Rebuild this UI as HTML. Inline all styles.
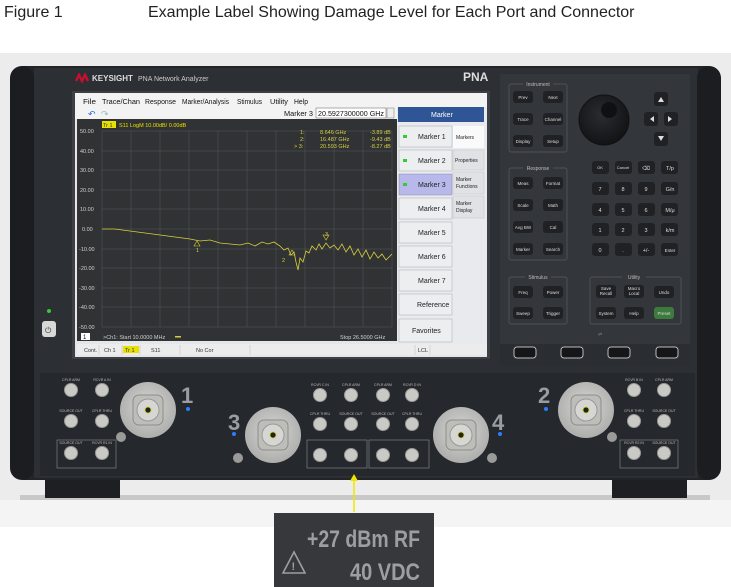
<!DOCTYPE html>
<html><head><meta charset="utf-8"><style>
html,body{margin:0;padding:0;background:#fff;width:731px;height:587px;overflow:hidden}
svg{display:block}
text{font-family:"Liberation Sans",sans-serif}
</style></head><body>
<svg width="731" height="587" viewBox="0 0 731 587">
<defs>
<radialGradient id="knob" cx="0.45" cy="0.4" r="0.6"><stop offset="0" stop-color="#2a2c30"/><stop offset="1" stop-color="#121315"/></radialGradient>
<radialGradient id="bigc" cx="0.5" cy="0.45" r="0.6"><stop offset="0" stop-color="#d8d8d6"/><stop offset="1" stop-color="#a9a9a7"/></radialGradient>
</defs>
<rect width="731" height="587" fill="#fff"/>
<text x="4" y="17" font-size="16" fill="#222">Figure 1</text>
<text x="148" y="17" font-size="16" fill="#222">Example Label Showing Damage Level for Each Port and Connector</text>
<rect x="0" y="53" width="731" height="474" fill="#ececec"/>
<rect x="0" y="500" width="731" height="27" fill="#f4f4f4"/>
<rect x="20" y="495" width="690" height="5" fill="#c8c8c8"/>
<rect x="45" y="470" width="75" height="28" fill="#1d1f22"/>
<rect x="612" y="470" width="75" height="28" fill="#1d1f22"/>
<rect x="10" y="66" width="711" height="414" rx="14" fill="#222428"/>
<rect x="34" y="68" width="664" height="410" fill="#2c2f34"/>
<rect x="10" y="66" width="24" height="414" rx="12" fill="#1b1d20"/>
<rect x="697" y="66" width="24" height="414" rx="12" fill="#1b1d20"/>
<rect x="500" y="74" width="190" height="270" fill="#33363b"/>
<rect x="500" y="344" width="190" height="22" fill="#2a2d31"/>
<path d="M76 81 l3 -6 l3 6 l3 -6 l3 6" stroke="#c8102e" stroke-width="2.5" fill="none"/>
<text x="92" y="81" font-size="8" fill="#ddd" font-weight="bold">KEYSIGHT</text>
<text x="138" y="81" font-size="7" fill="#ccc">PNA Network Analyzer</text>
<text x="463" y="81" font-size="12" fill="#ddd" font-weight="bold">PNA</text>
<rect x="72" y="91" width="418" height="268" fill="#3c3f44"/>
<rect x="75" y="93" width="412" height="264" fill="#e4e6ea"/>
<rect x="75" y="93" width="412" height="14" fill="#f3f3f3"/>
<g font-size="7" fill="#111">
<text x="83" y="104" textLength="13" lengthAdjust="spacingAndGlyphs">File</text><text x="102" y="104" textLength="38" lengthAdjust="spacingAndGlyphs">Trace/Chan</text><text x="145" y="104" textLength="31" lengthAdjust="spacingAndGlyphs">Response</text><text x="182" y="104" textLength="47" lengthAdjust="spacingAndGlyphs">Marker/Analysis</text><text x="237" y="104" textLength="25" lengthAdjust="spacingAndGlyphs">Stimulus</text><text x="270" y="104" textLength="18" lengthAdjust="spacingAndGlyphs">Utility</text><text x="294" y="104" textLength="14" lengthAdjust="spacingAndGlyphs">Help</text>
</g>
<rect x="75" y="107" width="322" height="12" fill="#f3f3f3"/>
<text x="284" y="116" font-size="7.5" fill="#111" textLength="29" lengthAdjust="spacingAndGlyphs">Marker 3</text>
<rect x="316" y="108" width="70" height="10" fill="#fff" stroke="#777" stroke-width="0.6"/>
<text x="318" y="116" font-size="7.5" fill="#111" textLength="66" lengthAdjust="spacingAndGlyphs">20.5927300000 GHz</text>
<rect x="387" y="108" width="7" height="10" fill="#eee" stroke="#777" stroke-width="0.5"/>
<text x="88" y="117" font-size="9" fill="#2a6fd0">↶</text><text x="101" y="117" font-size="9" fill="#9bb">↷</text>
<rect x="77" y="119" width="320" height="222" fill="#303234"/>
<g stroke="#55585a" stroke-width="0.5">
<path d="M102 131H392M102 151H392M102 170H392M102 190H392M102 209H392M102 229H392M102 249H392M102 268H392M102 288H392M102 307H392M102 327H392"/>
<path d="M102 131V327M131 131V327M160 131V327M189 131V327M218 131V327M247 131V327M276 131V327M305 131V327M334 131V327M363 131V327M392 131V327"/>
</g>
<g font-size="5.5" fill="#cfcfcf">
<text x="80" y="133">50.00</text><text x="80" y="153">40.00</text><text x="80" y="172">30.00</text><text x="80" y="192">20.00</text><text x="80" y="211">10.00</text><text x="82" y="231">0.00</text><text x="79" y="251">-10.00</text><text x="79" y="270">-20.00</text><text x="79" y="290">-30.00</text><text x="79" y="309">-40.00</text><text x="79" y="329">-50.00</text>
</g>
<rect x="102" y="121" width="14" height="7" fill="#e8e000"/>
<text x="103" y="127" font-size="5.5" fill="#333">Tr 1</text>
<text x="119" y="127" font-size="5.5" fill="#e8e000">S11 LogM 10.00dB/  0.00dB</text>
<g font-size="5.5" fill="#d8cf40">
<text x="300" y="134">1:</text><text x="320" y="134">8.646 GHz</text><text x="370" y="134">-3.89 dB</text>
<text x="300" y="141">2:</text><text x="320" y="141">16.487 GHz</text><text x="370" y="141">-9.43 dB</text>
<text x="294" y="148">&gt; 3:</text><text x="320" y="148">20.593 GHz</text><text x="370" y="148">-8.27 dB</text>
</g>
<path d="M102 229 L115 229 L130 231 L145 233 L160 235 L175 237 L190 239 L200 241 L210 240 L220 243 L230 244 L240 245 L248 243 L255 246 L262 242 L268 244 L274 242 L280 246 L284 250 L288 248 L291 255 L294 252 L296 262 L298 270 L300 258 L303 262 L306 251 L309 253 L312 246 L316 250 L319 244 L322 249 L326 243 L330 248 L334 245 L338 250 L342 244 L346 252 L350 246 L354 255 L358 249 L362 257 L366 250 L370 259 L374 252 L378 258 L382 254 L386 260 L392 254" stroke="#d8cf40" stroke-width="0.8" fill="none"/>
<path d="M197 241 l-3 5 h6z M292 250 l-3 5 h6z M326 240 l-3 -5 h6z" stroke="#d8cf40" stroke-width="0.6" fill="none"/>
<g font-size="5.5" fill="#d8cf40"><text x="196" y="252">1</text><text x="282" y="262">2</text><text x="325" y="236">3</text></g>
<rect x="81" y="333" width="9" height="7" fill="#fff"/><text x="83" y="339" font-size="6" fill="#111">1</text>
<g font-size="5.5" fill="#cfcfcf"><text x="103" y="339">&gt;Ch1:   Start  10.0000 MHz</text><text x="340" y="339">Stop  26.5000 GHz</text></g>
<rect x="175" y="336" width="6" height="1.5" fill="#d8cf40"/>
<rect x="77" y="344" width="410" height="11" fill="#ececec"/>
<g font-size="5.5" fill="#333"><text x="84" y="352">Cont.</text><text x="104" y="352">Ch 1</text><text x="151" y="352">S11</text><text x="196" y="352">No Cor</text><text x="418" y="352">LCL</text></g>
<rect x="123" y="346" width="16" height="7" fill="#e8e000"/><text x="125" y="352" font-size="5.5" fill="#333">Tr 1</text>
<g stroke="#bbb" stroke-width="0.5"><path d="M99 345v10M122 345v10M140 345v10M180 345v10M250 345v10M415 345v10M430 345v10"/></g>
<rect x="397" y="107" width="90" height="237" fill="#e8eaee"/>
<rect x="398" y="107" width="86" height="15" fill="#2f5597"/>
<text x="431" y="117" font-size="7" fill="#fff">Marker</text>
<g font-size="7" fill="#222">
<rect x="399" y="126" width="53" height="21" fill="#eceef0" stroke="#aaa" stroke-width="0.5"/><text x="418" y="139">Marker 1</text><rect x="403" y="135" width="4" height="3" fill="#3c3"/>
<rect x="399" y="150" width="53" height="21" fill="#eceef0" stroke="#aaa" stroke-width="0.5"/><text x="418" y="163">Marker 2</text><rect x="403" y="159" width="4" height="3" fill="#3c3"/>
<rect x="399" y="174" width="53" height="21" fill="#b8b8ea" stroke="#88a" stroke-width="0.5"/><text x="418" y="187">Marker 3</text><rect x="403" y="183" width="4" height="3" fill="#3c3"/>
<rect x="399" y="198" width="53" height="21" fill="#eceef0" stroke="#aaa" stroke-width="0.5"/><text x="418" y="211">Marker 4</text>
<rect x="399" y="222" width="53" height="21" fill="#eceef0" stroke="#aaa" stroke-width="0.5"/><text x="418" y="235">Marker 5</text>
<rect x="399" y="246" width="53" height="21" fill="#eceef0" stroke="#aaa" stroke-width="0.5"/><text x="418" y="259">Marker 6</text>
<rect x="399" y="270" width="53" height="21" fill="#eceef0" stroke="#aaa" stroke-width="0.5"/><text x="418" y="283">Marker 7</text>
<rect x="399" y="294" width="53" height="21" fill="#eceef0" stroke="#aaa" stroke-width="0.5"/><text x="417" y="307">Reference</text>
<rect x="399" y="319" width="53" height="23" fill="#eceef0" stroke="#aaa" stroke-width="0.5"/><text x="412" y="333">Favorites</text>
</g>
<g font-size="5" fill="#222">
<rect x="453" y="126" width="31" height="22" fill="#fafafa"/><text x="456" y="139">Markers</text>
<rect x="453" y="150" width="31" height="20" fill="#e0e2e6" stroke="#bbb" stroke-width="0.4"/><text x="455" y="162">Properties</text>
<rect x="453" y="172" width="31" height="22" fill="#e0e2e6" stroke="#bbb" stroke-width="0.4"/><text x="456" y="181">Marker</text><text x="456" y="188">Functions</text>
<rect x="453" y="196" width="31" height="22" fill="#e0e2e6" stroke="#bbb" stroke-width="0.4"/><text x="456" y="205">Marker</text><text x="456" y="212">Display</text>
</g>
<circle cx="49" cy="311" r="2" fill="#3c3"/>
<rect x="42" y="321" width="14" height="16" rx="3" fill="#d8d8d8"/>
<text x="45" y="333" font-size="8" fill="#333">⏻</text>
<g fill="none" stroke="#5a5d62" stroke-width="0.7">
<rect x="509" y="84" width="58" height="68" rx="2"/><rect x="509" y="168" width="58" height="92" rx="2"/><rect x="509" y="277" width="58" height="47" rx="2"/><rect x="590" y="277" width="91" height="47" rx="2"/>
</g>
<g font-size="5" text-anchor="middle">
<rect x="523" y="81" width="30" height="6" fill="#33363b"/><rect x="523" y="165" width="30" height="6" fill="#33363b"/><rect x="525" y="274" width="26" height="6" fill="#33363b"/><rect x="622" y="274" width="24" height="6" fill="#33363b"/>
<g fill="#bbb"><text x="538" y="86">Instrument</text><text x="538" y="170">Response</text><text x="538" y="279">Stimulus</text><text x="634" y="279">Utility</text></g>
</g>
<g fill="#1f2124">
<rect x="513" y="91" width="20" height="12" rx="3"/><rect x="543" y="91" width="20" height="12" rx="3"/>
<rect x="513" y="113" width="20" height="12" rx="3"/><rect x="543" y="113" width="20" height="12" rx="3"/>
<rect x="513" y="135" width="20" height="12" rx="3"/><rect x="543" y="135" width="20" height="12" rx="3"/>
<rect x="513" y="177" width="20" height="12" rx="3"/><rect x="543" y="177" width="20" height="12" rx="3"/>
<rect x="513" y="199" width="20" height="12" rx="3"/><rect x="543" y="199" width="20" height="12" rx="3"/>
<rect x="513" y="221" width="20" height="12" rx="3"/><rect x="543" y="221" width="20" height="12" rx="3"/>
<rect x="513" y="243" width="20" height="12" rx="3"/><rect x="543" y="243" width="20" height="12" rx="3"/>
<rect x="513" y="286" width="20" height="12" rx="3"/><rect x="543" y="286" width="20" height="12" rx="3"/>
<rect x="513" y="307" width="20" height="12" rx="3"/><rect x="543" y="307" width="20" height="12" rx="3"/>
<rect x="596" y="285" width="20" height="13" rx="3"/><rect x="624" y="285" width="20" height="13" rx="3"/><rect x="654" y="286" width="20" height="12" rx="3"/>
<rect x="596" y="307" width="20" height="12" rx="3"/><rect x="624" y="307" width="20" height="12" rx="3"/>
</g>
<rect x="654" y="307" width="20" height="12" rx="3" fill="#3d7a3d"/>
<g font-size="4.5" fill="#ddd" text-anchor="middle">
<text x="523" y="99">Prev</text><text x="553" y="99">Next</text><text x="523" y="121">Trace</text><text x="553" y="121">Channel</text><text x="523" y="143">Display</text><text x="553" y="143">Setup</text>
<text x="523" y="185">Meas</text><text x="553" y="185">Format</text><text x="523" y="207">Scale</text><text x="553" y="207">Math</text><text x="523" y="229">Avg BW</text><text x="553" y="229">Cal</text><text x="523" y="251">Marker</text><text x="553" y="251">Search</text>
<text x="523" y="294">Freq</text><text x="553" y="294">Power</text><text x="523" y="315">Sweep</text><text x="553" y="315">Trigger</text>
<text x="606" y="290">Save</text><text x="606" y="295">Recall</text><text x="634" y="290">Macro</text><text x="634" y="295">Local</text><text x="664" y="294">Undo</text>
<text x="606" y="315">System</text><text x="634" y="315">Help</text><text x="664" y="315">Preset</text>
</g>
<circle cx="604" cy="120" r="25" fill="url(#knob)" stroke="#111" stroke-width="1"/>
<circle cx="609" cy="110" r="8" fill="#0f1012"/>
<g fill="#1f2124">
<rect x="654" y="92" width="14" height="14" rx="3"/><rect x="644" y="112" width="14" height="14" rx="3"/><rect x="664" y="112" width="14" height="14" rx="3"/><rect x="654" y="132" width="14" height="14" rx="3"/>
</g>
<g fill="#ddd"><path d="M658 102 l3 -5 l3 5z M654 116 v6 l-4 -3z M668 116 v6 l4 -3z M658 136 l3 5 l3 -5z"/></g>
<g fill="#1f2124">
<rect x="592" y="161" width="17" height="13" rx="3"/><rect x="615" y="161" width="17" height="13" rx="3"/><rect x="638" y="161" width="17" height="13" rx="3"/><rect x="661" y="161" width="17" height="13" rx="3"/>
<rect x="592" y="182" width="17" height="13" rx="3"/><rect x="615" y="182" width="17" height="13" rx="3"/><rect x="638" y="182" width="17" height="13" rx="3"/><rect x="661" y="182" width="17" height="13" rx="3"/>
<rect x="592" y="203" width="17" height="13" rx="3"/><rect x="615" y="203" width="17" height="13" rx="3"/><rect x="638" y="203" width="17" height="13" rx="3"/><rect x="661" y="203" width="17" height="13" rx="3"/>
<rect x="592" y="223" width="17" height="13" rx="3"/><rect x="615" y="223" width="17" height="13" rx="3"/><rect x="638" y="223" width="17" height="13" rx="3"/><rect x="661" y="223" width="17" height="13" rx="3"/>
<rect x="592" y="243" width="17" height="13" rx="3"/><rect x="615" y="243" width="17" height="13" rx="3"/><rect x="638" y="243" width="17" height="13" rx="3"/><rect x="661" y="243" width="17" height="13" rx="3"/>
</g>
<g font-size="5.5" fill="#ddd" text-anchor="middle">
<text x="600" y="169" font-size="4">OK</text><text x="623" y="169" font-size="4">Cancel</text><text x="646" y="170">⌫</text><text x="670" y="170">T/p</text>
<text x="600" y="191">7</text><text x="623" y="191">8</text><text x="646" y="191">9</text><text x="670" y="191">G/n</text>
<text x="600" y="212">4</text><text x="623" y="212">5</text><text x="646" y="212">6</text><text x="670" y="212">M/μ</text>
<text x="600" y="232">1</text><text x="623" y="232">2</text><text x="646" y="232">3</text><text x="670" y="232">k/m</text>
<text x="600" y="252">0</text><text x="623" y="252">.</text><text x="646" y="252">+/-</text><text x="670" y="252" font-size="4.5">Enter</text>
</g>
<text x="598" y="336" font-size="5" fill="#777">⇌</text>
<g fill="#15161a" stroke="#bbb" stroke-width="1">
<rect x="514" y="347" width="22" height="11" rx="3"/><rect x="561" y="347" width="22" height="11" rx="3"/><rect x="608" y="347" width="22" height="11" rx="3"/><rect x="656" y="347" width="22" height="11" rx="3"/>
</g>
<rect x="40" y="373" width="655" height="103" fill="#25282d"/>
<g fill="none" stroke="#8a8c90" stroke-width="0.6">
<rect x="57" y="440" width="59" height="28"/><rect x="307" y="440" width="60" height="28"/><rect x="369" y="440" width="60" height="28"/><rect x="620" y="440" width="58" height="28"/>
</g>
<g fill="#c9c9c5" stroke="#9a9a96" stroke-width="1">
<circle cx="71" cy="390" r="6.5"/><circle cx="102" cy="390" r="6.5"/><circle cx="71" cy="421" r="6.5"/><circle cx="102" cy="421" r="6.5"/><circle cx="71" cy="453" r="6.5"/><circle cx="102" cy="453" r="6.5"/>
<circle cx="320" cy="395" r="6.5"/><circle cx="351" cy="395" r="6.5"/><circle cx="383" cy="395" r="6.5"/><circle cx="412" cy="395" r="6.5"/>
<circle cx="320" cy="424" r="6.5"/><circle cx="351" cy="424" r="6.5"/><circle cx="383" cy="424" r="6.5"/><circle cx="412" cy="424" r="6.5"/>
<circle cx="320" cy="455" r="6.5"/><circle cx="351" cy="455" r="6.5"/><circle cx="383" cy="455" r="6.5"/><circle cx="412" cy="455" r="6.5"/>
<circle cx="634" cy="390" r="6.5"/><circle cx="664" cy="390" r="6.5"/><circle cx="634" cy="421" r="6.5"/><circle cx="664" cy="421" r="6.5"/><circle cx="634" cy="453" r="6.5"/><circle cx="664" cy="453" r="6.5"/>
</g>
<g font-size="3.5" fill="#bbb" text-anchor="middle">
<text x="71" y="381">CPLR ARM</text><text x="102" y="381">RCVR A IN</text><text x="71" y="412">SOURCE OUT</text><text x="102" y="412">CPLR THRU</text><text x="71" y="444">SOURCE OUT</text><text x="102" y="444">RCVR R1 IN</text>
<text x="320" y="386">RCVR C IN</text><text x="351" y="386">CPLR ARM</text><text x="383" y="386">CPLR ARM</text><text x="412" y="386">RCVR D IN</text>
<text x="320" y="415">CPLR THRU</text><text x="351" y="415">SOURCE OUT</text><text x="383" y="415">SOURCE OUT</text><text x="412" y="415">CPLR THRU</text>
<text x="634" y="381">RCVR B IN</text><text x="664" y="381">CPLR ARM</text><text x="634" y="412">CPLR THRU</text><text x="664" y="412">SOURCE OUT</text><text x="634" y="444">RCVR R2 IN</text><text x="664" y="444">SOURCE OUT</text>
</g>
<g>
<circle cx="148" cy="410" r="28" fill="url(#bigc)"/><rect x="133" y="395" width="30" height="30" rx="6" fill="#bdbdb9" stroke="#8d8d89"/><circle cx="148" cy="410" r="11" fill="#d6d6d2" stroke="#999"/><circle cx="148" cy="410" r="3" fill="#222" stroke="#cc3" stroke-width="0.8"/>
<circle cx="273" cy="435" r="28" fill="url(#bigc)"/><rect x="258" y="420" width="30" height="30" rx="6" fill="#bdbdb9" stroke="#8d8d89"/><circle cx="273" cy="435" r="11" fill="#d6d6d2" stroke="#999"/><circle cx="273" cy="435" r="3" fill="#222" stroke="#cc3" stroke-width="0.8"/>
<circle cx="461" cy="435" r="28" fill="url(#bigc)"/><rect x="446" y="420" width="30" height="30" rx="6" fill="#bdbdb9" stroke="#8d8d89"/><circle cx="461" cy="435" r="11" fill="#d6d6d2" stroke="#999"/><circle cx="461" cy="435" r="3" fill="#222" stroke="#cc3" stroke-width="0.8"/>
<circle cx="586" cy="410" r="28" fill="url(#bigc)"/><rect x="571" y="395" width="30" height="30" rx="6" fill="#bdbdb9" stroke="#8d8d89"/><circle cx="586" cy="410" r="11" fill="#d6d6d2" stroke="#999"/><circle cx="586" cy="410" r="3" fill="#222" stroke="#cc3" stroke-width="0.8"/>
</g>
<g fill="#9a9a98"><circle cx="121" cy="437" r="5"/><circle cx="238" cy="458" r="5"/><circle cx="492" cy="458" r="5"/><circle cx="612" cy="437" r="5"/></g>
<g font-size="22" font-weight="bold" fill="#9a9da2"><text x="181" y="403">1</text><text x="228" y="430">3</text><text x="492" y="430">4</text><text x="538" y="403">2</text></g>
<g fill="#2a7fff"><circle cx="188" cy="409" r="2"/><circle cx="234" cy="434" r="2"/><circle cx="500" cy="434" r="2"/><circle cx="546" cy="409" r="2"/></g>
<line x1="354" y1="477" x2="354" y2="512" stroke="#f0e600" stroke-width="1.5"/>
<path d="M350 481 l4 -7 l4 7z" fill="#f0e600"/>
<rect x="274" y="513" width="160" height="74" fill="#36383b"/>
<text x="307" y="547" font-size="24" font-weight="bold" fill="#9c9ea0" textLength="113" lengthAdjust="spacingAndGlyphs">+27 dBm RF</text>
<text x="350" y="580" font-size="24" font-weight="bold" fill="#9c9ea0" textLength="70" lengthAdjust="spacingAndGlyphs">40 VDC</text>
<path d="M294 552 l-11 21 h22z" fill="none" stroke="#9c9ea0" stroke-width="1.6"/>
<text x="291.5" y="570" font-size="11" font-weight="bold" fill="#9c9ea0">!</text>
</svg>
</body></html>
